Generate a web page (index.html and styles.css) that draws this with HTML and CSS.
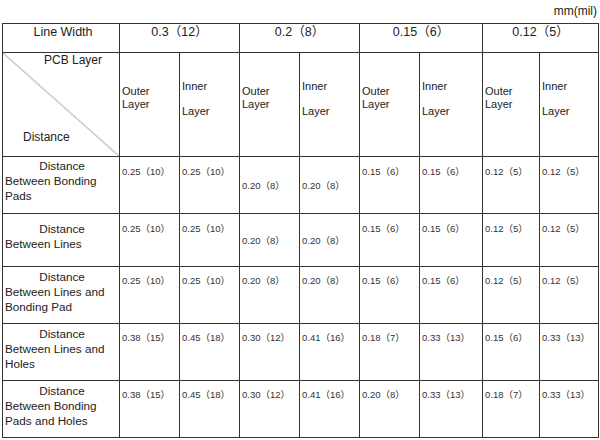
FILE: index.html
```html
<!DOCTYPE html>
<html lang="en">
<head>
<meta charset="utf-8">
<title>PCB spacing table</title>
<link rel="stylesheet" href="styles.css">
</head>
<body>
<div class="page">
  <div class="unit">mm(mil)</div>
  <table class="spec">
    <colgroup>
      <col class="c-lbl"><col class="c60"><col class="c60"><col class="c60"><col class="c60"><col class="c60"><col class="c63"><col class="c57"><col class="c59">
    </colgroup>
    <tr class="r-h1">
      <th class="lw">Line Width</th>
      <th colspan="2">0.3（12）</th>
      <th colspan="2">0.2（8）</th>
      <th colspan="2">0.15（6）</th>
      <th colspan="2">0.12（5）</th>
    </tr>
    <tr class="r-h2">
      <th class="diag"><div class="diag-in"><span class="pcb">PCB Layer</span><span class="dst">Distance</span></div></th>
      <td class="outer">Outer<br>Layer</td><td class="inner">Inner<br>Layer</td>
      <td class="outer">Outer<br>Layer</td><td class="inner">Inner<br>Layer</td>
      <td class="outer">Outer<br>Layer</td><td class="inner">Inner<br>Layer</td>
      <td class="outer">Outer<br>Layer</td><td class="inner">Inner<br>Layer</td>
    </tr>
    <tr class="r-57">
      <td class="lbl p1"><div class="c">Distance</div>Between Bonding<br>Pads</td>
      <td class="v p9">0.25（10）</td><td class="v p9">0.25（10）</td>
      <td class="v mid">0.20（8）</td><td class="v mid">0.20（8）</td>
      <td class="v p9">0.15（6）</td><td class="v p9">0.15（6）</td>
      <td class="v p9">0.12（5）</td><td class="v p9">0.12（5）</td>
    </tr>
    <tr class="r-53">
      <td class="lbl p7"><div class="c">Distance</div>Between Lines</td>
      <td class="v p9">0.25（10）</td><td class="v p9">0.25（10）</td>
      <td class="v mid">0.20（8）</td><td class="v mid">0.20（8）</td>
      <td class="v p9">0.15（6）</td><td class="v p9">0.15（6）</td>
      <td class="v p9">0.12（5）</td><td class="v p9">0.12（5）</td>
    </tr>
    <tr class="r-57">
      <td class="lbl p2"><div class="c">Distance</div>Between Lines and<br>Bonding Pad</td>
      <td class="v p8">0.25（10）</td><td class="v p8">0.25（10）</td>
      <td class="v p8">0.20（8）</td><td class="v p8">0.20（8）</td>
      <td class="v p8">0.15（6）</td><td class="v p8">0.15（6）</td>
      <td class="v p8">0.12（5）</td><td class="v p8">0.12（5）</td>
    </tr>
    <tr class="r-57">
      <td class="lbl p2"><div class="c">Distance</div>Between Lines and<br>Holes</td>
      <td class="v p8">0.38（15）</td><td class="v p8">0.45（18）</td>
      <td class="v p8">0.30（12）</td><td class="v p8">0.41（16）</td>
      <td class="v p8">0.18（7）</td><td class="v p8">0.33（13）</td>
      <td class="v p8">0.15（6）</td><td class="v p8">0.33（13）</td>
    </tr>
    <tr class="r-57">
      <td class="lbl p2"><div class="c">Distance</div>Between Bonding<br>Pads and Holes</td>
      <td class="v p8">0.38（15）</td><td class="v p8">0.45（18）</td>
      <td class="v p8">0.30（12）</td><td class="v p8">0.41（16）</td>
      <td class="v p8">0.20（8）</td><td class="v p8">0.33（13）</td>
      <td class="v p8">0.18（7）</td><td class="v p8">0.33（13）</td>
    </tr>
  </table>
</div>
</body>
</html>
```

FILE: styles.css
```css
html, body {
  margin: 0;
  background: #ffffff;
}
body {
  font-family: "Liberation Sans", Arial, "Noto Sans CJK SC", sans-serif;
  color: #222222;
}
.page {
  padding: 0 2px 0 2px;
}
.unit {
  height: 19px;
  padding: 4px 1px 0 0;
  font-size: 12px;
  line-height: 15px;
  text-align: right;
}
.spec {
  border-collapse: collapse;
  table-layout: fixed;
  width: 596px;
}
.c-lbl { width: 117px; }
.c60 { width: 60px; }
.c63 { width: 63px; }
.c57 { width: 57px; }
.c59 { width: 59px; }

.spec th,
.spec td {
  border: 1px solid #333333;
  padding: 0;
  vertical-align: top;
  text-align: left;
  font-weight: normal;
}
.r-h1 { height: 29px; }
.r-h2 { height: 104px; }
.r-57 { height: 57px; }
.r-53 { height: 53px; }

.spec .r-h1 th {
  font-size: 12.5px;
  line-height: 15px;
  padding-top: 1px;
  text-align: center;
}
.spec .r-h1 th.lw {
  padding-left: 4px;
}

.spec .diag {
  background: linear-gradient(to top right, transparent calc(50% - 0.7px), #8a8a8a 50%, transparent calc(50% + 0.7px));
}
.diag-in {
  height: 92px;
  padding: 0 17px 11px 20px;
  display: flex;
  flex-direction: column;
  justify-content: space-between;
  font-size: 12px;
  line-height: 15px;
}
.pcb { align-self: flex-end; }
.dst { align-self: flex-start; }

.spec .outer,
.spec .inner {
  font-size: 11px;
  padding-left: 2px;
}
.spec .outer {
  line-height: 13px;
  padding-top: 32px;
}
.spec .inner {
  line-height: 25px;
  padding-top: 21px;
}

.spec .lbl {
  font-size: 11.7px;
  line-height: 15px;
  padding-left: 2px;
}
.lbl .c {
  text-align: center;
}
.spec .lbl.p1 { padding-top: 1px; }
.spec .lbl.p2 { padding-top: 2px; }
.spec .lbl.p7 { padding-top: 7px; }

.spec .v {
  font-family: "Liberation Sans Narrow", "Liberation Sans", Arial, "Noto Sans CJK SC", sans-serif;
  font-size: 9.5px;
  line-height: 11px;
  color: #333333;
  padding-left: 2px;
}
.spec .v.p9 { padding-top: 9px; }
.spec .v.p8 { padding-top: 8px; }
.spec td.v.mid {
  vertical-align: middle;
  padding-top: 0;
}
```
